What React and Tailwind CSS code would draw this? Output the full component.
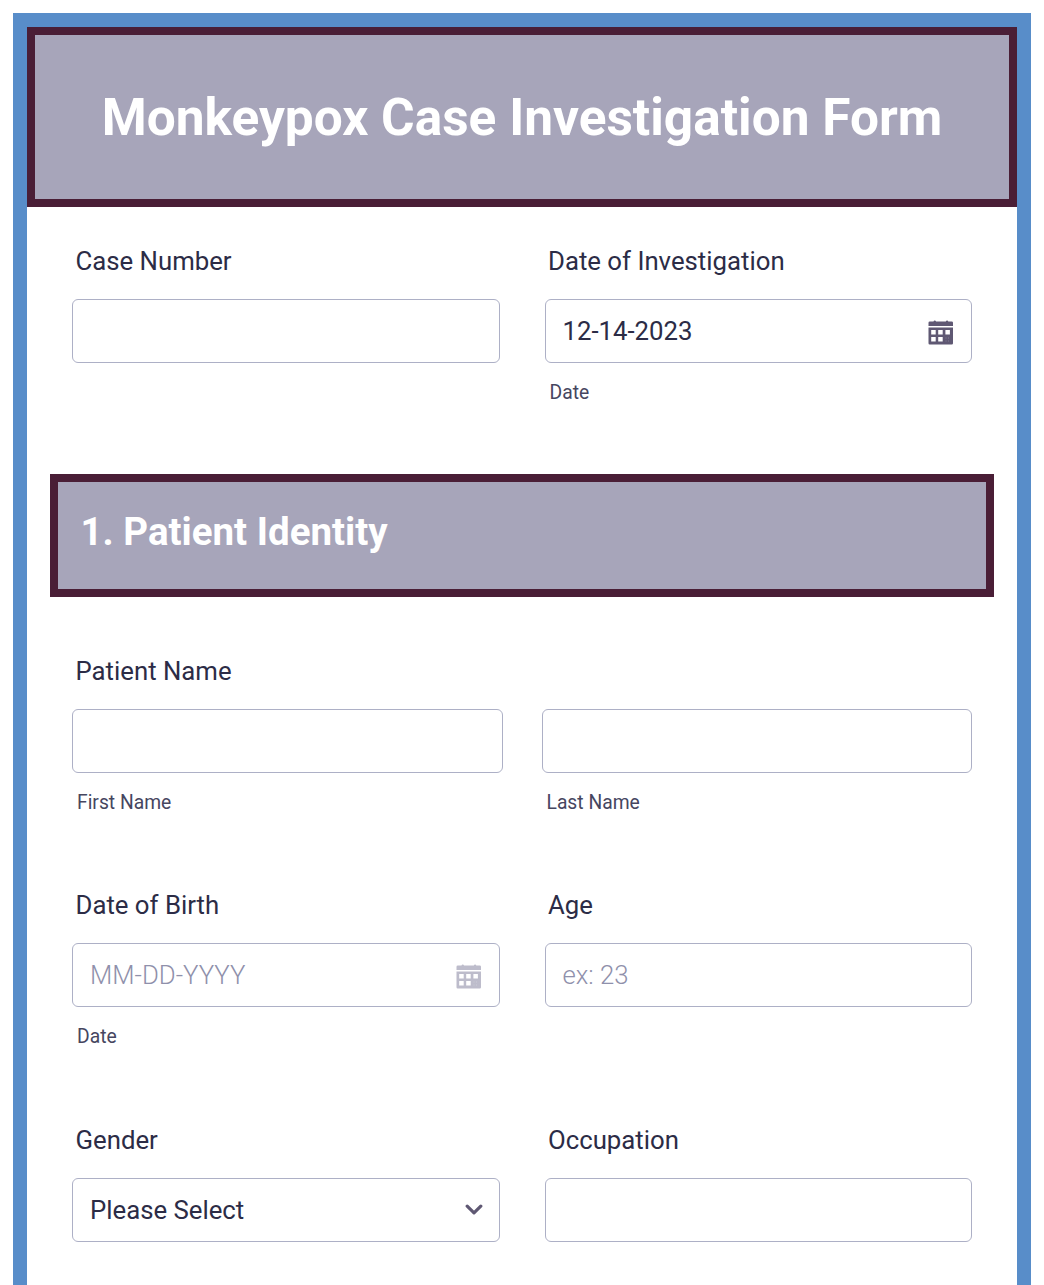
import React from 'react';

const CalendarIcon = ({ className }) => (
  <svg width="26" height="25" viewBox="0 0 26 25" className={`relative top-px ${className}`} fill="currentColor">
    <path d="M1.800 1.500H5.500A1.300 1.300 0 0 1 8 1.500h9.800a1.300 1.300 0 0 1 2.500 0H23.700a1.300 1.300 0 0 1 1.300 1.300V6H.5V2.800a1.300 1.300 0 0 1 1.300-1.300z" />
    <path
      fillRule="evenodd"
      d="M.5 7.500H25V23.300a1.200 1.200 0 0 1-1.200 1.200H1.700A1.200 1.200 0 0 1 .5 23.300zM3.200 10v4.600H7.700V10zM10.200 10v4.600h4.500V10zM17.400 10v4.600h4.500V10zM3.200 17v4.600H7.700V17zM10.200 17v4.600h4.500V17z"
    />
    <path d="M17.500 18H22M17.500 21H22" stroke="white" strokeWidth=".6" strokeDasharray="1 1.500" opacity=".4" />
  </svg>
);

const ChevronIcon = () => (
  <svg width="18" height="12" viewBox="0 0 18 12" className="relative left-px text-[#5f5873]">
    <path d="M2.200 2.200 9 8.900l6.800-6.700" fill="none" stroke="currentColor" strokeWidth="3.200" strokeLinecap="round" strokeLinejoin="round" />
  </svg>
);

const Field = ({ label, value, placeholder, sub, icon }) => (
  <div className="flex-1 min-w-0">
    <div className="h-[53px] pl-[3.5px] text-[25.75px] leading-[30px] text-[#2c2c46] whitespace-nowrap">{label}</div>
    <div className="h-16 flex items-center justify-between border border-[#adb0c6] rounded-md pl-[17px] pr-[17px] text-[25.75px]">
      {value && <span className="pt-px text-[#2c2c46]">{value}</span>}
      {placeholder && <span className="pt-px font-light text-[#8f90ab]">{placeholder}</span>}
      {icon}
    </div>
    {sub && <div className="mt-[17px] pl-[5px] text-[19.3px] leading-[25px] text-[#46465f]">{sub}</div>}
  </div>
);

const Row = ({ children, gap = 'gap-[45px]' }) => (
  <div className={`flex h-[234px] ${gap}`}>{children}</div>
);

export default function App() {
  return (
    <div className="w-[1044px] h-[1285px] overflow-hidden bg-white pt-[13px] px-[13px] font-['Roboto',sans-serif]">
      <div className="h-[1300px] bg-[#588dc9] pt-[14px] px-[14px]">
        <div className="h-full bg-white">
          <header className="h-[180px] border-8 border-[#4a1e36] bg-[#a7a5ba] flex items-center justify-center">
            <h1 className="pt-[2px] text-[51.4px] leading-[60px] font-bold text-white whitespace-nowrap">
              Monkeypox Case Investigation Form
            </h1>
          </header>

          <div className="px-[45px] pt-[39px]">
            <div className="flex gap-[45px] h-[228px]">
              <Field label="Case Number" />
              <Field
                label="Date of Investigation"
                value="12-14-2023"
                sub="Date"
                icon={<CalendarIcon className="text-[#5f5873]" />}
              />
            </div>

            <div className="-mx-[22px] h-[123px] border-8 border-[#4a1e36] bg-[#a7a5ba] px-[22.5px] pt-[27px]">
              <h2 className="text-[38.5px] leading-[46px] font-bold text-white">1. Patient Identity</h2>
            </div>

            <div className="pt-[59px]">
              {/* name parts sit closer together than the other columns */}
              <Row gap="gap-[39px]">
                <Field label="Patient Name" sub="First Name" />
                <Field label="" sub="Last Name" />
              </Row>
              <Row>
                <Field
                  label="Date of Birth"
                  placeholder="MM-DD-YYYY"
                  sub="Date"
                  icon={<CalendarIcon className="text-[#bdbccb]" />}
                />
                <Field label="Age" placeholder="ex: 23" />
              </Row>
              <div className="pt-px">
                <Row>
                  <Field label="Gender" value="Please Select" icon={<ChevronIcon />} />
                  <Field label="Occupation" />
                </Row>
              </div>
            </div>
          </div>
        </div>
      </div>
    </div>
  );
}
